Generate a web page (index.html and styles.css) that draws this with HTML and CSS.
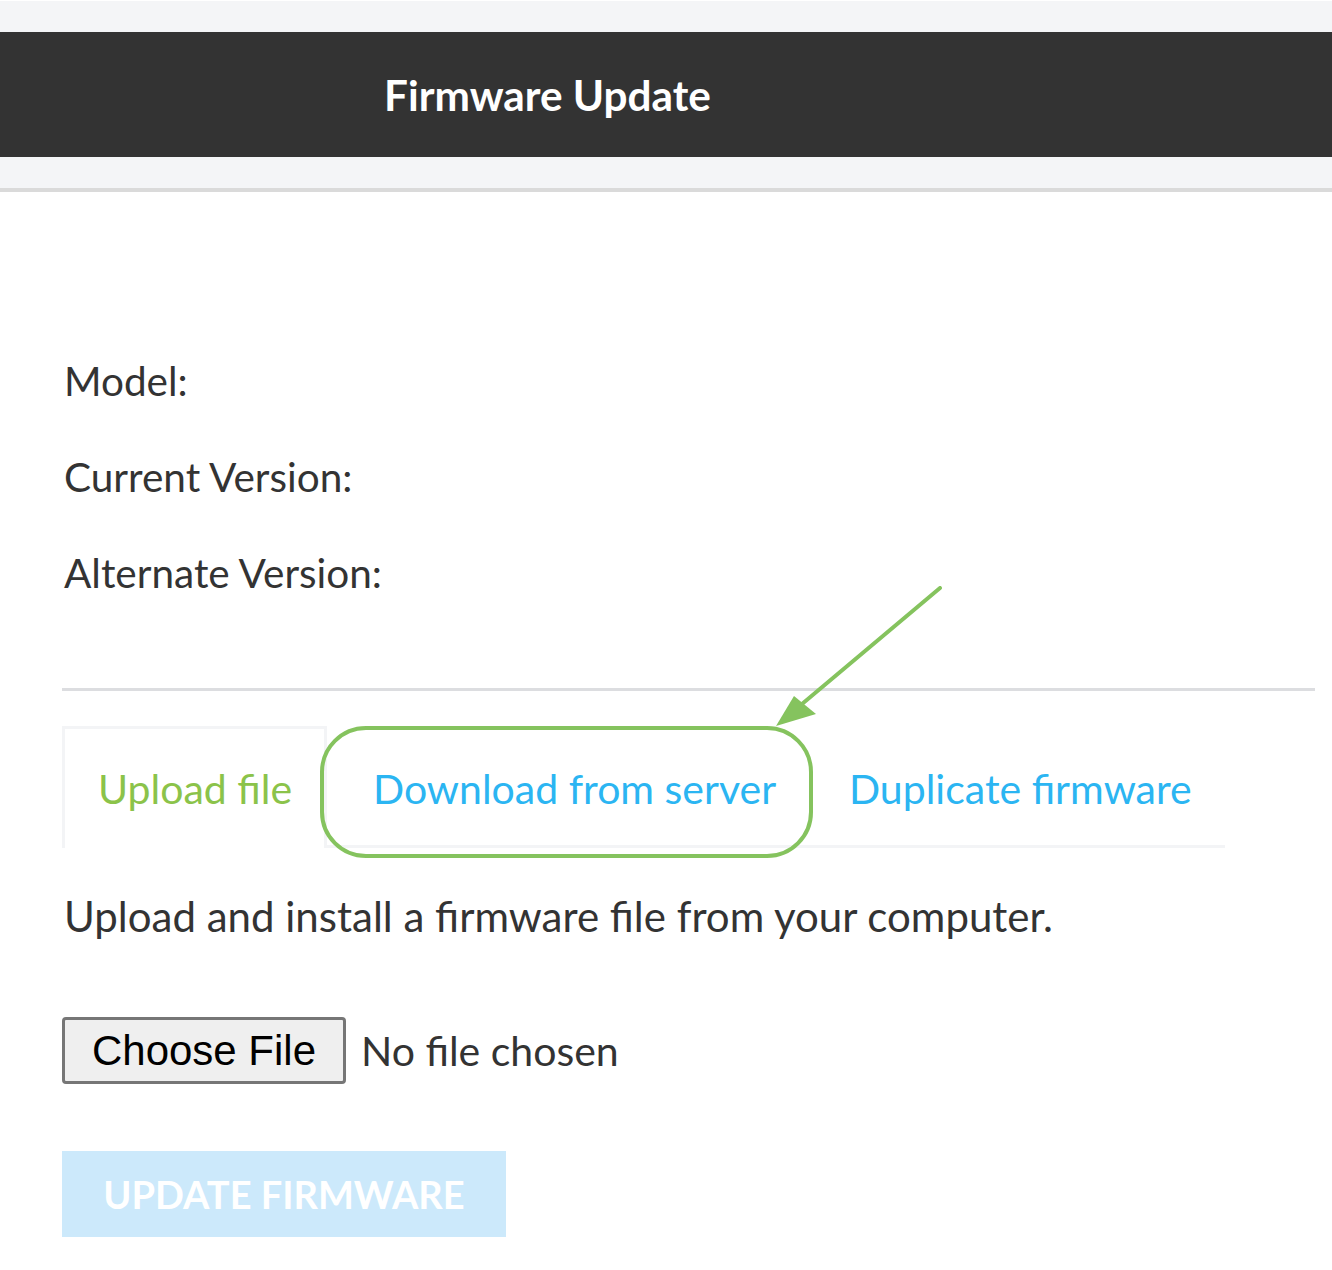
FILE: index.html
```html
<!DOCTYPE html>
<html lang="en">
<head>
<meta charset="utf-8">
<title>Firmware Update</title>
<link rel="stylesheet" href="styles.css">
</head>
<body>
<div class="top-strip"></div>
<header class="title-bar">
  <h1 class="title">Firmware Update</h1>
</header>
<div class="sub-strip"></div>
<main class="content">
  <section class="info">
    <p class="info-row">Model:</p>
    <p class="info-row">Current Version:</p>
    <p class="info-row">Alternate Version:</p>
  </section>
  <hr class="divider">
  <nav class="tabs">
    <a class="tab tab-active">Upload file</a>
    <a class="tab tab-download">Download from server</a>
    <a class="tab tab-dup">Duplicate firmware</a>
    <span class="highlight"></span>
    <svg class="arrow" width="180" height="150" viewBox="0 0 180 150">
      <line x1="168" y1="2" x2="30" y2="118" stroke="#85c35e" stroke-width="4" stroke-linecap="round"/>
      <polygon points="4,140 22,110 44,128" fill="#85c35e"/>
    </svg>
  </nav>
  <p class="desc">Upload and install a firmware file from your computer.</p>
  <div class="file-row">
    <span class="file-btn">Choose File</span>
    <span class="file-name">No file chosen</span>
  </div>
  <button class="update-btn" disabled>UPDATE FIRMWARE</button>
</main>
</body>
</html>
```

FILE: styles.css
```css
html, body {
  margin: 0;
  padding: 0;
  background: #ffffff;
}
body {
  font-family: "Lato", "Open Sans", sans-serif;
  color: #333333;
}
.top-strip {
  height: 31px;
  margin-top: 1px;
  background: #f4f5f7;
}
.title-bar {
  height: 125px;
  background: #333333;
  display: flex;
  align-items: center;
  padding-left: 384px;
}
.title {
  margin: 0;
  color: #ffffff;
  font-size: 42.3px;
  font-weight: 700;
}
.sub-strip {
  height: 31px;
  background: #f4f5f7;
  border-bottom: 4px solid #dadada;
}
.content {
  padding: 0 17px 40px 62px;
}
.info {
  padding-top: 168px;
}
.info-row {
  margin: 0 0 0 2px;
  height: 96px;
  font-size: 40.5px;
  line-height: 41px;
}
.divider {
  margin: 40px 0 0 0;
  border: none;
  height: 3px;
  background: #dcdde0;
}
.tabs {
  position: relative;
  display: flex;
  margin-top: 35px;
  height: 122px;
  width: 1163px;
}
.tab {
  display: flex;
  align-items: center;
  box-sizing: border-box;
  height: 122px;
  padding: 6px 30px 0 36px;
  font-size: 41px;
  color: #2bb5f2;
  border-bottom: 3px solid #f3f4f6;
  white-space: nowrap;
}
.tab-active {
  color: #8bc34a;
  border: 3px solid #f3f4f6;
  border-bottom: none;
  width: 265px;
  padding-top: 0;
  padding-left: 33px;
}
.tab-download {
  width: 488px;
  padding-left: 46px;
}
.tab-dup {
  width: 410px;
  padding-left: 34px;
}
.highlight {
  position: absolute;
  left: 258px;
  top: 0;
  width: 493px;
  height: 132px;
  box-sizing: border-box;
  border: 4px solid #85c35e;
  border-radius: 46px;
}
.arrow {
  position: absolute;
  left: 710px;
  top: -140px;
}
.desc {
  margin: 44px 0 0 2px;
  font-size: 42px;
  line-height: 48px;
}
.file-row {
  display: flex;
  align-items: center;
  margin-top: 77px;
}
.file-btn {
  box-sizing: border-box;
  width: 284px;
  height: 67px;
  display: flex;
  align-items: center;
  justify-content: center;
  background: #efefef;
  border: 3px solid #767676;
  border-radius: 4px;
  font-family: "Liberation Sans", Arial, sans-serif;
  font-size: 42px;
  color: #000000;
}
.file-name {
  margin-left: 15px;
  font-size: 41px;
  color: #333333;
}
.update-btn {
  display: block;
  margin-top: 67px;
  width: 444px;
  height: 86px;
  border: none;
  background: #cce9fb;
  color: #ffffff;
  font-family: "Lato", sans-serif;
  font-weight: 700;
  font-size: 38px;
  padding: 0;
}
```
